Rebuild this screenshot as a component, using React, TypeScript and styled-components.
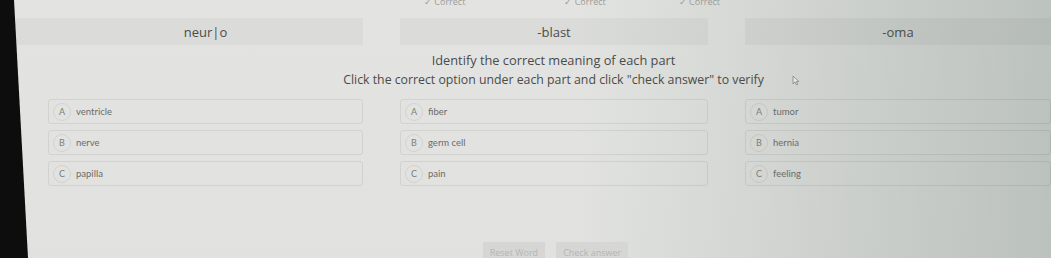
import styled, { createGlobalStyle } from "styled-components";

const GlobalStyle = createGlobalStyle`
  html, body {
    margin: 0;
    padding: 0;
    height: 100%;
    overflow: hidden;
  }
  body {
    background:
      linear-gradient(to right, rgba(255,255,255,0) 55%, rgba(120,135,128,0.36) 100%),
      linear-gradient(to bottom, #e3e4e1 0%, #e1e2df 100%);
    font-family: "Open Sans", "Liberation Sans", sans-serif;
  }
`;

const Bezel = styled.div`
  position: fixed;
  left: 0;
  top: 0;
  width: 30px;
  height: 100%;
  background: #0d0d0d;
  clip-path: polygon(0 0, 14px 0, 28px 100%, 0 100%);
`;

const Screen = styled.div`
  width: 1051px;
  height: 258px;
  overflow: hidden;
`;

const StatusRow = styled.div`
  display: flex;
  align-items: flex-end;
  height: 6px;
  overflow: hidden;
  padding-left: 424px;
`;

const Status = styled.span<{ $gap: number }>`
  margin-left: ${(p) => p.$gap}px;
  font-size: 9px;
  line-height: 11px;
  color: #9a9c9a;
  white-space: nowrap;
  transform: translateY(1px);
`;

const Columns = styled.div`
  display: grid;
  grid-template-columns: 315px 308px 306px;
  column-gap: 37px;
  padding-left: 48px;
`;

const HeaderRow = styled(Columns)`
  margin-top: 12px;
`;

const PartBox = styled.div<{ $bleed?: boolean }>`
  height: 27px;
  display: flex;
  align-items: center;
  justify-content: center;
  background: rgba(0, 0, 0, 0.035);
  font-size: 13px;
  color: #4b4c4b;
  margin-left: ${(p) => (p.$bleed ? "-33px" : "0")};
  padding-left: ${(p) => (p.$bleed ? "33px" : "0")};
`;

const Instructions = styled.div`
  margin-top: 6px;
  padding-left: 56px;
  text-align: center;
  line-height: 18px;
  color: #4a4b4a;
`;

const Title = styled.div`
  font-size: 12.8px;
`;

const Subline = styled.div`
  display: inline-flex;
  align-items: center;
  position: relative;
  font-size: 12.3px;
`;

const Pointer = styled.svg`
  position: absolute;
  right: -36px;
  top: 4px;
`;

const OptionGrid = styled(Columns)`
  margin-top: 10px;
`;

const OptionColumn = styled.div`
  display: flex;
  flex-direction: column;
  gap: 6px;
`;

const Option = styled.div`
  height: 25px;
  box-sizing: border-box;
  border: 1px solid rgba(0, 0, 0, 0.07);
  border-radius: 3px;
  display: flex;
  align-items: center;
  gap: 5px;
  padding-left: 4px;
  font-family: Lato, "Liberation Sans", sans-serif;
  font-size: 9.5px;
  color: #6a6b6a;
`;

const Letter = styled.span`
  width: 16px;
  height: 16px;
  border-radius: 50%;
  border: 1px solid rgba(0, 0, 0, 0.07);
  display: flex;
  align-items: center;
  justify-content: center;
  font-size: 9px;
  color: #7c7d7c;
`;

const Actions = styled.div`
  margin-top: 56px;
  display: flex;
  justify-content: center;
  gap: 11px;
  padding-left: 60px;
`;

const ActionButton = styled.button`
  height: 20px;
  padding: 0 7px;
  border: none;
  background: #d6d7d5;
  color: #b4b6b4;
  font-family: "Open Sans", "Liberation Sans", sans-serif;
  font-size: 9px;
`;

const parts = ["neur|o", "-blast", "-oma"];

const options = [
  ["ventricle", "nerve", "papilla"],
  ["fiber", "germ cell", "pain"],
  ["tumor", "hernia", "feeling"],
];

const letters = ["A", "B", "C"];

function App() {
  return (
    <Screen>
      <GlobalStyle />
      <Bezel />
      <StatusRow>
        <Status $gap={0}>✓ Correct</Status>
        <Status $gap={99}>✓ Correct</Status>
        <Status $gap={73}>✓ Correct</Status>
      </StatusRow>

      <HeaderRow>
        {parts.map((p, i) => (
          <PartBox key={p} $bleed={i === 0}>
            {p}
          </PartBox>
        ))}
      </HeaderRow>

      <Instructions>
        <Title>Identify the correct meaning of each part</Title>
        <Subline>
          Click the correct option under each part and click "check answer" to verify
          <Pointer width="8" height="11" viewBox="0 0 8 11">
            <path
              d="M1 1 L1 9 L3 7 L4.6 10 L5.8 9.4 L4.3 6.5 L7 6.5 Z"
              fill="#e6e6e4"
              stroke="#8a8c8a"
              strokeWidth="0.9"
              strokeLinejoin="round"
            />
          </Pointer>
        </Subline>
      </Instructions>

      <OptionGrid>
        {options.map((col, c) => (
          <OptionColumn key={c}>
            {col.map((label, r) => (
              <Option key={label}>
                <Letter>{letters[r]}</Letter>
                {label}
              </Option>
            ))}
          </OptionColumn>
        ))}
      </OptionGrid>

      <Actions>
        <ActionButton>Reset Word</ActionButton>
        <ActionButton>Check answer</ActionButton>
      </Actions>
    </Screen>
  );
}

export default App;
